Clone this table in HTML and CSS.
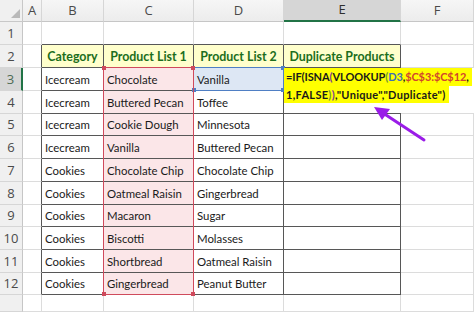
FILE: index.html
```html
<!DOCTYPE html>
<html>
<head>
<meta charset="utf-8">
<link rel="stylesheet" href="styles.css">
</head>
<body>
<div class="sheet">
  <!-- column headers -->
  <div class="c corner"><span class="tri"></span></div>
  <div class="c ch">A</div>
  <div class="c ch">B</div>
  <div class="c ch">C</div>
  <div class="c ch">D</div>
  <div class="c ch sel">E</div>
  <div class="c ch">F</div>
  <!-- row 1 -->
  <div class="c rh">1</div>
  <div class="c"></div>
  <div class="c tt"></div>
  <div class="c tt"></div>
  <div class="c tt"></div>
  <div class="c tt"></div>
  <div class="c"></div>
  <!-- row 2 -->
  <div class="c rh">2</div>
  <div class="c tl"></div>
  <div class="c t hd">Category</div>
  <div class="c t hd">Product List 1</div>
  <div class="c t hd">Product List 2</div>
  <div class="c t hd">Duplicate Products</div>
  <div class="c"></div>
  <!-- row 3 -->
  <div class="c rh rsel">3</div>
  <div class="c tl"></div>
  <div class="c t">Icecream</div>
  <div class="c t pk">Chocolate</div>
  <div class="c t bl">Vanilla</div>
  <div class="c t"></div>
  <div class="c"></div>
  <!-- row 4 -->
  <div class="c rh">4</div>
  <div class="c tl"></div>
  <div class="c t">Icecream</div>
  <div class="c t pk">Buttered Pecan</div>
  <div class="c t">Toffee</div>
  <div class="c t"></div>
  <div class="c"></div>
  <!-- row 5 -->
  <div class="c rh">5</div>
  <div class="c tl"></div>
  <div class="c t">Icecream</div>
  <div class="c t pk">Cookie Dough</div>
  <div class="c t">Minnesota</div>
  <div class="c t"></div>
  <div class="c"></div>
  <!-- row 6 -->
  <div class="c rh">6</div>
  <div class="c tl"></div>
  <div class="c t">Icecream</div>
  <div class="c t pk">Vanilla</div>
  <div class="c t">Buttered Pecan</div>
  <div class="c t"></div>
  <div class="c"></div>
  <!-- row 7 -->
  <div class="c rh">7</div>
  <div class="c tl"></div>
  <div class="c t">Cookies</div>
  <div class="c t pk">Chocolate Chip</div>
  <div class="c t">Chocolate Chip</div>
  <div class="c t"></div>
  <div class="c"></div>
  <!-- row 8 -->
  <div class="c rh">8</div>
  <div class="c tl"></div>
  <div class="c t">Cookies</div>
  <div class="c t pk">Oatmeal Raisin</div>
  <div class="c t">Gingerbread</div>
  <div class="c t"></div>
  <div class="c"></div>
  <!-- row 9 -->
  <div class="c rh">9</div>
  <div class="c tl"></div>
  <div class="c t">Cookies</div>
  <div class="c t pk">Macaron</div>
  <div class="c t">Sugar</div>
  <div class="c t"></div>
  <div class="c"></div>
  <!-- row 10 -->
  <div class="c rh">10</div>
  <div class="c tl"></div>
  <div class="c t">Cookies</div>
  <div class="c t pk">Biscotti</div>
  <div class="c t">Molasses</div>
  <div class="c t"></div>
  <div class="c"></div>
  <!-- row 11 -->
  <div class="c rh">11</div>
  <div class="c tl"></div>
  <div class="c t">Cookies</div>
  <div class="c t pk">Shortbread</div>
  <div class="c t">Oatmeal Raisin</div>
  <div class="c t"></div>
  <div class="c"></div>
  <!-- row 12 -->
  <div class="c rh">12</div>
  <div class="c tl"></div>
  <div class="c t">Cookies</div>
  <div class="c t pk">Gingerbread</div>
  <div class="c t">Peanut Butter</div>
  <div class="c t"></div>
  <div class="c"></div>
  <!-- row 13 -->
  <div class="c rh"></div>
  <div class="c"></div>
  <div class="c"></div>
  <div class="c"></div>
  <div class="c"></div>
  <div class="c"></div>
  <div class="c"></div>

  <!-- overlays -->
  <div class="range-blue">
    <span class="knob kbl"></span><span class="knob ktr"></span><span class="knob kbr"></span>
  </div>
  <div class="range-red">
    <span class="knob ktl"></span><span class="knob ktr"></span><span class="knob kbl"></span><span class="knob kbr"></span>
  </div>
  <div class="editor">
    <div class="fl l1">=IF(ISNA<span class="p1">(</span>VLOOKUP<span class="p2">(</span><span class="rb">D3</span>,<span class="rr">$C$3:$C$12</span>,</div>
    <div class="fl l2">1,FALSE<span class="p2">)</span><span class="p1">)</span>,"Unique","Duplicate")</div>
  </div>
  <svg class="arrow" width="474" height="312" viewBox="0 0 474 312">
    <line x1="424" y1="140" x2="383" y2="113" stroke="#9a1ce8" stroke-width="3" stroke-linecap="round"/>
    <polygon points="374,107 390,109 382,120" fill="#9a1ce8"/>
  </svg>
</div>
</body>
</html>
```

FILE: styles.css
```css
html, body {
  margin: 0;
  padding: 0;
  background: #ffffff;
}
body {
  width: 474px;
  height: 312px;
  overflow: hidden;
  font-family: Lato, "Liberation Sans", sans-serif;
}
.sheet {
  position: relative;
  display: grid;
  grid-template-columns: 23px 19px 62px 90px 90px 117px 73px;
  grid-template-rows: 22px 23px 23px 23px 23px 22px 23px 23px 23px 22px 23px 23px 22px 17px;
  width: 474px;
  height: 312px;
  background: #ffffff;
}
.c {
  box-sizing: border-box;
  border-right: 1px solid #dcdcdc;
  border-bottom: 1px solid #dcdcdc;
  display: flex;
  align-items: center;
  padding: 0 3px;
  font-size: 11.4px;
  color: #1a1a1a;
  white-space: nowrap;
  overflow: hidden;
}
.corner {
  position: relative;
  background: #f0f0f0;
  border-right: 1px solid #c8c8c8;
  border-bottom: 1px solid #c8c8c8;
}
.tri {
  position: absolute;
  right: 2px;
  bottom: 3px;
  width: 0;
  height: 0;
  border-left: 9px solid transparent;
  border-bottom: 9px solid #b9b9b9;
}
.ch {
  background: linear-gradient(#f6f6f6, #ececec);
  border-right: 1px solid #d6d6d6;
  border-bottom: 1px solid #c6c6c6;
  justify-content: center;
  align-items: flex-end;
  padding-bottom: 2px;
  font-family: "Open Sans", Lato, sans-serif;
  font-size: 13px;
  color: #4a4a4a;
}
.ch.sel {
  background: #d6d6d6;
  border-bottom: 2px solid #217346;
  color: #2e2e2e;
}
.rh {
  background: #f0f0f0;
  border-right: 1px solid #c6c6c6;
  border-bottom: 1px solid #d6d6d6;
  justify-content: center;
  align-items: flex-end;
  padding: 0 0 2px 0;
  font-family: "Open Sans", Lato, sans-serif;
  font-size: 13px;
  color: #4a4a4a;
}
.rh.rsel {
  background: #d6d6d6;
  border-right: 2px solid #217346;
  color: #4d6b55;
}
.tt {
  border-bottom: 1px solid #575757;
}
.tl {
  border-right: 1px solid #575757;
}
.t {
  border-right: 1px solid #575757;
  border-bottom: 1px solid #575757;
}
.hd {
  background: #ffffcc;
  justify-content: center;
  font-weight: 700;
  font-size: 12.4px;
  color: #1c6e1c;
  padding: 0;
}
.pk {
  background: #fbe6e8;
}
.bl {
  background: #dde7f4;
}

/* selection overlays: absolutely positioned inside their grid area */
.range-red {
  position: absolute;
  grid-column: 4 / 5;
  grid-row: 4 / 14;
  top: -1px;
  left: -1px;
  right: 0;
  bottom: 0;
  box-sizing: border-box;
  border: 1px solid #cf4a5c;
  z-index: 3;
  pointer-events: none;
}
.range-red .knob {
  background: #cf4a5c;
}
.range-blue {
  position: absolute;
  grid-column: 5 / 6;
  grid-row: 4 / 5;
  top: -1px;
  left: -1px;
  right: 0;
  bottom: 0;
  box-sizing: border-box;
  border: 1px solid #4f7fc4;
  z-index: 2;
  pointer-events: none;
}
.range-blue .knob {
  background: #4f7fc4;
}
.knob {
  position: absolute;
  width: 4px;
  height: 4px;
}
.ktl { left: -2px; top: -2px; }
.ktr { right: -2px; top: -2px; }
.kbl { left: -2px; bottom: -2px; }
.kbr { right: -2px; bottom: -2px; }

.editor {
  position: absolute;
  grid-column: 6 / 8;
  grid-row: 4 / 6;
  top: 0;
  left: 0;
  right: 0;
  bottom: 1px;
  background: #ffffff;
  z-index: 4;
  font-family: Lato, "Liberation Sans", sans-serif;
  font-weight: 700;
  font-size: 11px;
  color: #1a1a1a;
}
.fl {
  width: fit-content;
  background: #ffff00;
  height: 18px;
  line-height: 18px;
  padding: 0 3px 0 2px;
  white-space: nowrap;
}
.l1 {
  letter-spacing: -0.1px;
}
.l2 {
  height: 17px;
  line-height: 17px;
  letter-spacing: 0.3px;
}
.p1 { color: #7a3d9a; }
.p2 { color: #6f9a2e; }
.rb { color: #3f6fb6; }
.rr { color: #d2452c; }

.arrow {
  position: absolute;
  left: 0;
  top: 0;
  z-index: 5;
  pointer-events: none;
}
```
